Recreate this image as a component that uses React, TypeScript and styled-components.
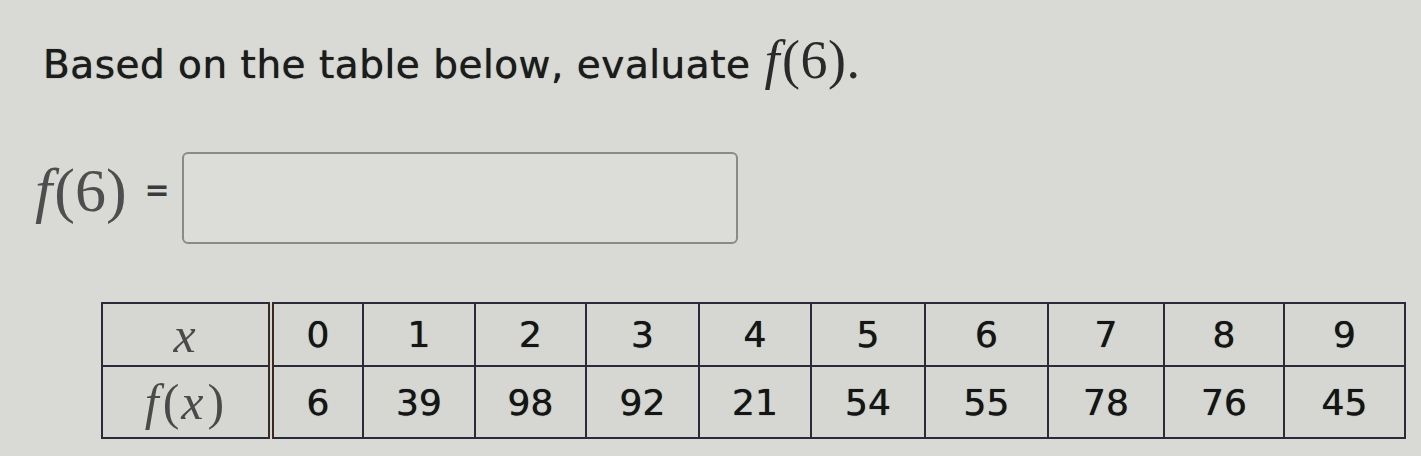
import React from 'react';
import styled, { createGlobalStyle } from 'styled-components';

const GlobalStyle = createGlobalStyle`
    html, body {
        margin: 0;
        padding: 0;
        background: #d9d9d6;
    }
`;

const StyledPage = styled.div`
    width: 1421px;
    height: 456px;
    box-sizing: border-box;
    padding: 36px 0 0 43px;
    background: #d9d9d6;
    color: #2b2b2b;
    font-family: "DejaVu Sans", Verdana, sans-serif;
    overflow: hidden;
`;

const StyledQuestion = styled.div`
    display: flex;
    align-items: baseline;
    font-size: 39px;
    line-height: 48px;
    letter-spacing: 0.5px;
    color: #1c1c1c;
    text-shadow: 0 0 0.8px #1c1c1c;
    white-space: pre;
`;

const StyledMath = styled.span`
    font-family: "Liberation Serif", "Times New Roman", serif;
    font-size: 54px;
    letter-spacing: 0.5px;
    color: #2a2a2a;
    margin-left: 14px;
    text-shadow: none;
`;

const StyledVar = styled.i`
    font-style: italic;
    margin-right: 2px;
`;

const StyledAnswerRow = styled.div`
    display: flex;
    align-items: center;
    gap: 12px;
    margin: 63px 0 0 -8px;
`;

const StyledLabel = styled.div`
    display: flex;
    align-items: center;
    gap: 18px;
    padding-bottom: 16px;
    font-family: "Liberation Serif", "Times New Roman", serif;
    font-size: 62px;
    line-height: 72px;
    color: #4e4e4e;
`;

const StyledEquals = styled.span`
    font-family: "DejaVu Sans", Verdana, sans-serif;
    font-size: 30px;
    font-weight: bold;
    color: #3a3a3a;
`;

const StyledInput = styled.div`
    width: 556px;
    height: 92px;
    box-sizing: border-box;
    border: 2px solid #8a8a88;
    border-radius: 6px;
    background: #dcdcd9;
`;

const StyledTable = styled.table`
    margin: 58px 0 0 58px;
    border-collapse: collapse;
    table-layout: fixed;
    width: 1303px;
    font-family: "DejaVu Sans", Verdana, sans-serif;
    font-size: 36px;
    color: #151515;
`;

const StyledCell = styled.td<{ tall?: boolean }>`
    height: ${({ tall }) => (tall ? 70 : 61)}px;
    padding: 0;
    border: 2px solid #2a2a3a;
    text-align: center;
    vertical-align: middle;
    background: #d6d7d3;
    text-shadow: 0 0 0.8px #151515;
`;

const StyledHeadCell = styled(StyledCell)`
    border-right: 6px double #3b2a22;
    font-family: "Liberation Serif", "Times New Roman", serif;
    font-size: 50px;
    color: #4a4a4a;
    text-shadow: none;
`;

const StyledUpright = styled.span`
    font-style: normal;
    margin: 0 2px;
`;

const xs = [0, 1, 2, 3, 4, 5, 6, 7, 8, 9];
const fx = [6, 39, 98, 92, 21, 54, 55, 78, 76, 45];
const widths = [92, 112, 111, 113, 112, 114, 123, 116, 120, 121];

const App = () => {
    return (
        <StyledPage>
            <GlobalStyle />
            <StyledQuestion>
                Based on the table below, evaluate
                <StyledMath>
                    <StyledVar>f</StyledVar>(6).
                </StyledMath>
            </StyledQuestion>
            <StyledAnswerRow>
                <StyledLabel>
                    <span>
                        <StyledVar>f</StyledVar>(6)
                    </span>
                    <StyledEquals>=</StyledEquals>
                </StyledLabel>
                <StyledInput />
            </StyledAnswerRow>
            <StyledTable>
                <colgroup>
                    <col style={{ width: 169 }} />
                    {widths.map((w, i) => (
                        <col key={i} style={{ width: w }} />
                    ))}
                </colgroup>
                <tbody>
                    <tr>
                        <StyledHeadCell>
                            <StyledVar>x</StyledVar>
                        </StyledHeadCell>
                        {xs.map((x) => (
                            <StyledCell key={x}>{x}</StyledCell>
                        ))}
                    </tr>
                    <tr>
                        <StyledHeadCell tall>
                            <StyledVar>f</StyledVar>
                            <StyledUpright>(</StyledUpright>
                            <StyledVar>x</StyledVar>
                            <StyledUpright>)</StyledUpright>
                        </StyledHeadCell>
                        {fx.map((v, i) => (
                            <StyledCell key={i} tall>
                                {v}
                            </StyledCell>
                        ))}
                    </tr>
                </tbody>
            </StyledTable>
        </StyledPage>
    );
};

export default App;
